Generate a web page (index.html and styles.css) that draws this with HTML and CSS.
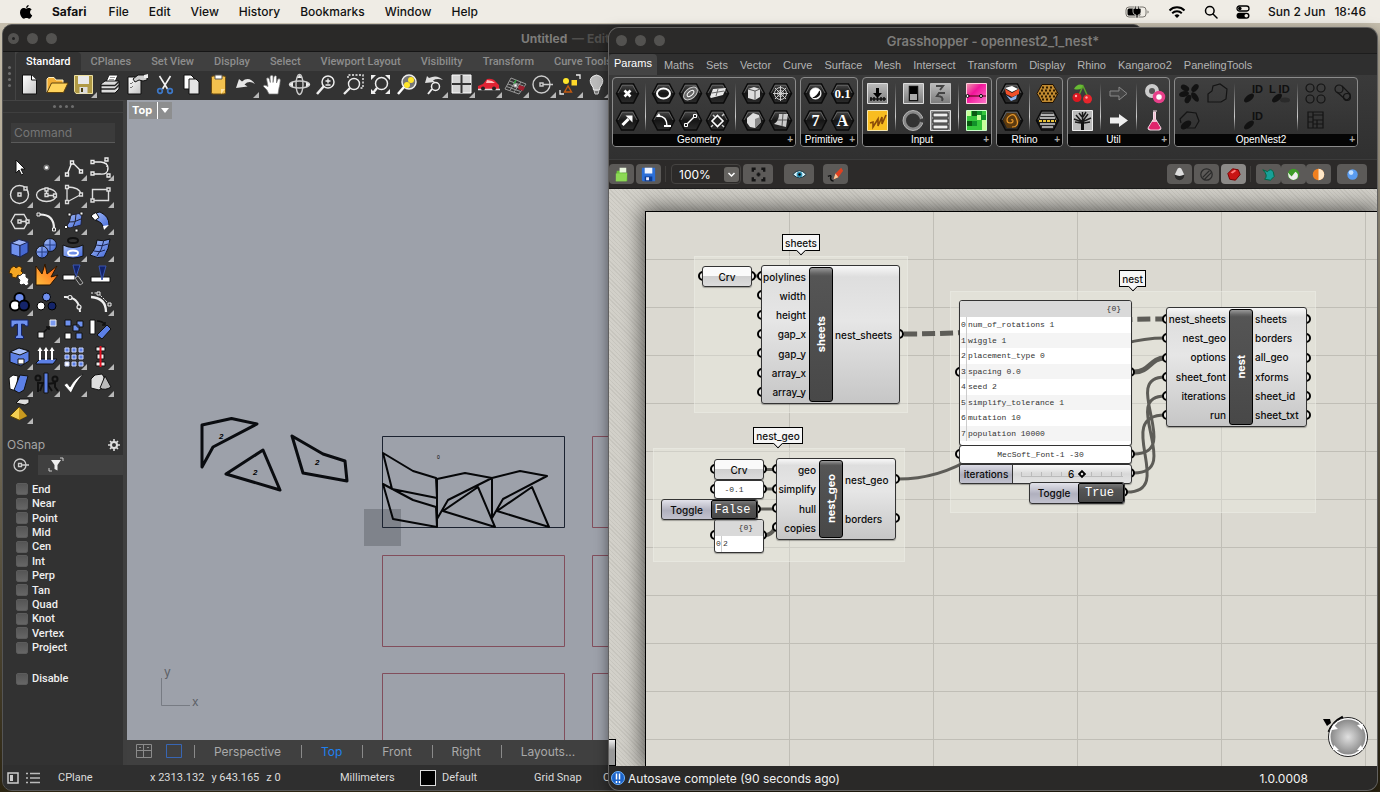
FILE: index.html
```html
<!DOCTYPE html>
<html lang="en">
<head>
<meta charset="utf-8">
<title>Grasshopper - opennest2_1_nest*</title>
<link rel="stylesheet" href="styles.css">
</head>
<body>
<svg class="defs" aria-hidden="true">
  <defs>
    <linearGradient id="gHex" x1="0" y1="0" x2="0" y2="1"><stop offset="0" stop-color="#4a4a4a"/><stop offset=".5" stop-color="#161616"/><stop offset="1" stop-color="#2c2c2c"/></linearGradient>
    <linearGradient id="gPaper" x1="0" y1="0" x2="1" y2="1"><stop offset="0" stop-color="#fff"/><stop offset="1" stop-color="#c4c4c4"/></linearGradient>
    <linearGradient id="gBlue" x1="0" y1="0" x2="1" y2="1"><stop offset="0" stop-color="#a9c0f8"/><stop offset="1" stop-color="#4066d8"/></linearGradient>
    <linearGradient id="gFire" x1="0" y1="1" x2="1" y2="0"><stop offset="0" stop-color="#ffc040"/><stop offset="1" stop-color="#ff5a10"/></linearGradient>
    <linearGradient id="gSteel" x1="0" y1="0" x2="0" y2="1"><stop offset="0" stop-color="#bbb"/><stop offset="1" stop-color="#7b7b7b"/></linearGradient>
    <linearGradient id="gPink" x1="0" y1="0" x2="1" y2="1"><stop offset="0" stop-color="#e9a"/><stop offset=".4" stop-color="#f2159a"/><stop offset="1" stop-color="#f7c"/></linearGradient>
    <radialGradient id="gDial"><stop offset="0" stop-color="#e0e0e0"/><stop offset="1" stop-color="#8a8a8a"/></radialGradient>
    <symbol id="hex" viewBox="0 0 27 27"><path d="M2.500 13.500 7.500 4h12l5 9.500-5 9.500h-12z" fill="url(#gHex)" stroke="#0a0a0a" stroke-width="1.500"/><path d="M4 13 8.300 5.200h10.400L23 13" fill="none" stroke="#777" stroke-width=".7"/></symbol>
  </defs>
</svg>

<header class="menubar">
  <svg class="apple" width="14" height="16" viewBox="0 0 14 16"><path d="M9.700 1c.1 1.500-1.200 2.900-2.600 2.900C7 2.500 8.200 1.200 9.700 1zM7.200 4.700c.7 0 1.500-.7 2.800-.7 1 0 2.100.6 2.700 1.500-2.400 1.400-2 4.800.5 5.700-.5 1.400-1.700 3.500-3.100 3.500-1 0-1.300-.6-2.600-.6s-1.700.6-2.600.6C3.300 14.700 1 11.400 1 8.500 1 5.700 2.800 4.100 4.500 4.100c1.200 0 2 .6 2.700.6z"/></svg>
  <nav class="menus">
    <button type="button" class="app">Safari</button><button type="button">File</button><button type="button">Edit</button><button type="button">View</button><button type="button">History</button><button type="button">Bookmarks</button><button type="button">Window</button><button type="button">Help</button>
  </nav>
  <div class="menu-extras">
    <svg width="25" height="14" viewBox="0 0 25 14"><rect x="1" y="2" width="20" height="10" rx="3" fill="none" stroke="#77746e"/><rect x="2.500" y="3.500" width="13" height="7" rx="1.500"/><path d="M22.500 5.500v3c1.500-.5 1.500-2.500 0-3z" fill="#77746e"/><path d="M8 3.500h1.500V1h1.500v2.500h2V1h1.500v2.500H16V7q0 2.500-3 3v3h-2v-3Q8 9.500 8 7z" stroke="#efece5" stroke-width=".7"/></svg>
    <svg width="18" height="14" viewBox="0 0 18 14" fill="none" stroke="#000" stroke-width="2"><path d="M1.500 5.500a10.500 10.500 0 0 1 15 0M4.200 8.300a6.800 6.800 0 0 1 9.600 0"/><path d="M6.500 10.500a3.600 3.600 0 0 1 5 0L9 13z" fill="#000" stroke="none"/></svg>
    <svg width="14" height="14" viewBox="0 0 14 14" fill="none" stroke="#000" stroke-width="1.500"><circle cx="5.800" cy="5.800" r="4.300"/><path d="m9 9 4 4" stroke-linecap="round"/></svg>
    <svg width="14" height="14" viewBox="0 0 14 14"><rect x="1" y="1" width="12" height="5" rx="2.500" fill="none" stroke="#000" stroke-width="1.300"/><circle cx="3.800" cy="3.500" r="1.800"/><rect x=".5" y="7.700" width="13" height="6" rx="3"/><circle cx="10.300" cy="10.700" r="1.800" fill="#efece5"/></svg>
    <time class="clock"><span>Sun 2 Jun</span><span>18:46</span></time>
  </div>
</header>

<main class="desktop">
<section class="window rhino" aria-label="Rhino">
  <div class="titlebar"><span class="lights"><i class="edited"></i><i></i><i></i></span><h1>Untitled <small>— Edited</small></h1></div>
  <div class="toolbars">
    <span class="handle"><i></i><i></i><i></i><i></i></span>
    <div class="bars">
      <nav class="rtabs"><button type="button" class="on">Standard</button><button type="button">CPlanes</button><button type="button">Set View</button><button type="button">Display</button><button type="button">Select</button><button type="button">Viewport Layout</button><button type="button">Visibility</button><button type="button">Transform</button><button type="button">Curve Tools</button></nav>
      <div class="tools">
        <button type="button" aria-label="New"><svg viewBox="0 0 27 27"><path d="M6.500 4h9l5 5v14h-14z" fill="url(#gPaper)" stroke="#111"/><path d="M15.500 4v5h5" fill="#fff" stroke="#111"/></svg></button>
        <button type="button" aria-label="Open"><svg viewBox="0 0 27 27"><path d="M4 21V8l1.500-1.500H11L13 9h7v3" fill="#f2ae35" stroke="#fff0c0"/><path d="M4 21.500 8.500 12H25l-4.500 9.500z" fill="#ffd35c" stroke="#60420c"/></svg></button>
        <button type="button" class="fly" aria-label="Save"><svg viewBox="0 0 27 27"><path d="M4.500 4.500h18v18H6l-1.500-2z" fill="#b09a45" stroke="#ecdfa0"/><path d="M8 5h11v8H8z" fill="#e8e8e8"/><path d="M9.500 16h8v6.500h-8z" fill="#ddd"/><path d="M11 17h2v4h-2z" fill="#4a4010"/></svg></button>
        <button type="button" aria-label="Print"><svg viewBox="0 0 27 27"><path d="M9 11 12 4h9l-3 7z" fill="#fff" stroke="#222"/><path d="M4 13l4-3h14v8l-4 4H4z" fill="#ddd" stroke="#111"/><path d="M4 14.500h14M4 18h14M18 14.500l4-4M18 18l4-4" stroke="#222" stroke-width="1.500"/><path d="M13 6.500h5M12 8.500h5" stroke="#999"/></svg></button>
        <button type="button" aria-label="Properties"><svg viewBox="0 0 27 27"><path d="M4 6h13v17H4z" fill="url(#gPaper)" stroke="#111"/><path d="M9 8l5-4h9v5l-4 1-4-1-4 2z" fill="#ccc" stroke="#111"/><path d="m20 4 4-1v4h-4z" fill="#eee"/><path d="m6 12 1 1 2-2M6 16l1 1 2-2" fill="none" stroke="#777"/></svg></button>
        <button type="button" aria-label="Cut"><svg viewBox="0 0 27 27" fill="none"><path d="m8.500 5 8 13M19.500 5l-8 13" stroke="#f2f2f2" stroke-width="1.600"/><circle cx="9" cy="20" r="2.300" stroke="#3d78c8" stroke-width="1.700"/><circle cx="19" cy="20" r="2.300" stroke="#3d78c8" stroke-width="1.700"/></svg></button>
        <button type="button" aria-label="Copy"><svg viewBox="0 0 27 27" stroke="#111"><path d="M6 4h7l3 3v11H6z" fill="#fff"/><path d="M11 8h7l3 3v12H11z" fill="#e4e4e4"/></svg></button>
        <button type="button" aria-label="Paste"><svg viewBox="0 0 27 27"><rect x="6.500" y="5" width="14" height="18" rx="1.500" fill="#f3c14e" stroke="#6a4a10"/><path d="M10 4h7v4h-7z" fill="#fff" stroke="#555"/><path d="M16 23v-5h4z" fill="#ffe3a0"/></svg></button>
        <button type="button" class="fly" aria-label="Undo"><svg viewBox="0 0 27 27"><path d="M4 17 7 8l3 2.500q7-6 13 2.500-6-4-10.500.5l3 2z" fill="#e6e6e6"/></svg></button>
        <button type="button" aria-label="Pan"><svg viewBox="0 0 27 27"><path d="M10 23Q8 18 4.500 15.500q0-2.500 4.500 0L7.500 7.500q2-2 3 1l.8 3-.3-6q2-2.500 3 0v6l1-6q2-1.500 2.500 0v6.500L19 8q2-1 2.300 1-.3 5-1.300 8l-1 6z" fill="#fff" stroke="#777" stroke-width=".7"/></svg></button>
        <button type="button" aria-label="Rotate view"><svg viewBox="0 0 27 27" fill="none" stroke="#ccc" stroke-width="1.400"><ellipse cx="13.500" cy="13.500" rx="10" ry="3.500"/><ellipse cx="13.500" cy="13.500" rx="3.500" ry="10"/><path d="m11 7 2.500-3L16 7zM20 11l4 2.500-4 2.500zM7 11l-4 2.500L7 16z" fill="#eee" stroke="none"/></svg></button>
        <button type="button" aria-label="Zoom"><svg viewBox="0 0 27 27" fill="none" stroke="#eee" stroke-width="1.500"><circle cx="15" cy="11" r="6"/><path d="m11 15-7 8" stroke-width="2.500"/><path d="M12.500 10h5M15 7.500v5M12.500 14h5" stroke-width="1.300"/></svg></button>
        <button type="button" aria-label="Zoom window"><svg viewBox="0 0 27 27" fill="none" stroke="#eee" stroke-width="1.400"><circle cx="14" cy="13" r="5.500"/><path d="m10 17-6 6" stroke-width="2.300"/><path d="M8 7V4h15v13h-3" stroke-dasharray="2 1.500"/></svg></button>
        <button type="button" aria-label="Zoom extents"><svg viewBox="0 0 27 27" fill="none" stroke="#eee" stroke-width="1.500"><circle cx="14.500" cy="12.500" r="6"/><path d="m10 17-4 5" stroke-width="2.300"/><path d="M4 9V4h5zM18 4h5v5zM23 18v5h-5zM4 18v5h5z" fill="#eee" stroke="none"/></svg></button>
        <button type="button" aria-label="Zoom selected"><svg viewBox="0 0 27 27"><circle cx="15" cy="11" r="7" fill="#777" stroke="#eee" stroke-width="1.500"/><circle cx="17" cy="9" r="3" fill="#ffe62a"/><circle cx="13" cy="14" r="3" fill="#ffe62a"/><path d="m10 16-6 7" stroke="#fff" stroke-width="2.500"/></svg></button>
        <button type="button" class="fly" aria-label="Undo view"><svg viewBox="0 0 27 27" fill="none"><path d="M4 12 6 5l2 2q8-4 14 2-6-2-10 .5l2 1.500z" fill="#ddd"/><circle cx="14.500" cy="15.500" r="4" stroke="#eee" stroke-width="1.500"/><path d="m11 18-4 5" stroke="#eee" stroke-width="2"/></svg></button>
        <button type="button" class="fly" aria-label="Four views"><svg viewBox="0 0 27 27"><path d="M4 4h19v18H4z" fill="#d4d4d4" stroke="#fff"/><path d="M13.500 4v18M4 13h19" stroke="#333" stroke-width="2"/></svg></button>
        <button type="button" class="fly" aria-label="Named view"><svg viewBox="0 0 27 27"><path d="M3 18v-3l5-2 4-5q6-1 9 3l3 3v4z" fill="#e02434"/><path d="m12 9 5 1 3 2h-9z" fill="#fbb"/><path d="M3 18.500h22" stroke="#ddd" stroke-width="1.500"/><circle cx="8" cy="17.500" r="2" fill="#222"/><circle cx="19" cy="17.500" r="2" fill="#222"/></svg></button>
        <button type="button" class="fly" aria-label="CPlane"><svg viewBox="0 0 27 27" fill="none" stroke="#999" stroke-width="1"><path d="M9 7 3 18l14 5 7-10zM7.500 10l14 5M6 13l14 5M4.500 15.500l14 5M14 9 8 19.500M19 11l-7 10"/><path d="m14 9-2 4" stroke="#30a040" stroke-width="1.500"/><path d="m17 14 6 2-2 4-5-2z" fill="#a02030" stroke="none"/><path d="M12 13h3v3h-3z" fill="#fff"/></svg></button>
        <button type="button" class="fly" aria-label="Object snap"><svg viewBox="0 0 27 27" fill="none" stroke="#ccc" stroke-width="1.400"><circle cx="12.500" cy="13.500" r="8.500"/><path d="M11 12h3v3h-3zM14 13.500h10"/></svg></button>
        <button type="button" class="fly" aria-label="Select"><svg viewBox="0 0 27 27"><circle cx="10" cy="10" r="3" fill="#ffe62a"/><path d="M15.500 9h5.500v5.500h-5.500z" fill="#ffd82a"/><path d="m12 15-3.500 6h7z" fill="none" stroke="#c35a10" stroke-width="1.400"/><path d="M20 4h4v4M4 19v4h4" fill="none" stroke="#eee" stroke-width="1.300"/></svg></button>
        <button type="button" class="fly" aria-label="Show"><svg viewBox="0 0 27 27"><path d="M10.500 19q0-3-2-5-3-5 1-8.500 4-3 8 0 4 3.500 1 8.500-2 2-2 5z" fill="#bbb" stroke="#eee"/><path d="M11 19.500h5l-1 3.500h-3z" fill="#777" stroke="#ccc"/></svg></button>
      </div>
    </div>
  </div>
  <div class="rbody">
    <aside class="side">
      <div class="grip"><i></i><i></i><i></i><i></i></div>
      <input class="command" type="text" placeholder="Command" aria-label="Command">
      <div class="palette">
        <button type="button" aria-label="Select"><svg viewBox="0 0 27 27"><path d="M10 6v13l3-3 2.500 5 2-1-2.500-5h4z" fill="#fff" stroke="#111"/></svg></button>
        <button type="button" class="fly" aria-label="Point"><svg viewBox="0 0 27 27"><circle cx="13.500" cy="13.500" r="2.300" fill="#fff" stroke="#777" stroke-width="1.500"/></svg></button>
        <button type="button" class="fly" aria-label="Polyline"><svg viewBox="0 0 27 27" fill="#333" stroke="#eee" stroke-width="1.400"><path d="m7 21 5-13 9 9" fill="none"/><path d="M5.500 19h3v3h-3zM10.500 7h3v3h-3zM19.500 16h3v3h-3z"/></svg></button>
        <button type="button" class="fly" aria-label="Curve"><svg viewBox="0 0 27 27" fill="#333" stroke="#eee" stroke-width="1.300"><path d="M6 8h8q7 1 7 6 0 7-8 6H6" fill="none"/><path d="M18 6l3 10" stroke-dasharray="1 2"/><path d="M4 6.500h3v3H4zM18 4h3v3h-3zM4 18h3v3H4zM20 20h3v3h-3z"/></svg></button>
        <button type="button" class="fly" aria-label="Circle"><svg viewBox="0 0 27 27" fill="#333" stroke="#ddd" stroke-width="1.400"><circle cx="13.500" cy="13.500" r="9"/><path d="M12 12h3v3h-3zM18 6h3v3h-3z"/></svg></button>
        <button type="button" class="fly" aria-label="Ellipse"><svg viewBox="0 0 27 27" fill="#333" stroke="#ddd" stroke-width="1.300"><ellipse cx="13.500" cy="14" rx="10" ry="6.500"/><path d="M13.500 8v6.500H23"/><path d="M12 7h3v3h-3zM12 12.500h3v3h-3zM20.500 13h3v3h-3z"/></svg></button>
        <button type="button" class="fly" aria-label="Arc"><svg viewBox="0 0 27 27" fill="#333" stroke="#ddd" stroke-width="1.300"><path d="M7 6q13 0 14 7.500L7 21z"/><path d="M5.500 4.500h3v3h-3zM5.500 19.500h3v3h-3zM19.500 12h3v3h-3z"/></svg></button>
        <button type="button" class="fly" aria-label="Rectangle"><svg viewBox="0 0 27 27" fill="#333" stroke="#ddd" stroke-width="1.400"><path d="M5.500 8.500h16v11h-16z"/><path d="M4 18h3v3H4zM20 7h3v3h-3z"/></svg></button>
        <button type="button" class="fly" aria-label="Polygon"><svg viewBox="0 0 27 27" fill="#333" stroke="#ddd" stroke-width="1.400"><path d="m5 13.500 4-7h9l4 7-4 7H9z"/><path d="M12 12h3v3h-3zM15 13.500h5M20 12h3v3h-3z"/></svg></button>
        <button type="button" class="fly" aria-label="Fillet"><svg viewBox="0 0 27 27" fill="#333" stroke="#eee"><path d="M7 6.500q14 0 14 14" fill="none" stroke-width="2.200"/><path d="M4 5h3v3H4zM19.500 20h3v3h-3z"/></svg></button>
        <button type="button" class="fly" aria-label="Surface from points"><svg viewBox="0 0 27 27"><path d="m11 7 11-2-1 12-11 3-4-1q4-4 5-12z" fill="url(#gBlue)" stroke="#223"/><path d="M8 14q6 1 13-3M16 6q0 8-3 13" stroke="#223" fill="none"/><path d="M8 5h3v3H8zM20 4h3v3h-3zM4.500 17.500h3v3h-3zM15 21h3v3h-3z" fill="#fff" stroke="#222"/></svg></button>
        <button type="button" class="fly" aria-label="Sweep"><svg viewBox="0 0 27 27"><path d="M4 8q4-4 9-4 9 4 9 13l-5 5Q16 13 7 12z" fill="url(#gBlue)" stroke="#111"/><path d="M4 8q3-3 5-3.500l3 5-4 3z" fill="#fff" stroke="#111"/><path d="M16 18l6-1-5 5z" fill="#fff"/></svg></button>
        <button type="button" class="fly" aria-label="Box"><svg viewBox="0 0 27 27" stroke="#1b2450"><path d="m5 8 8-3.500 9 2.500v10L14 22l-9-3z" fill="#9db4f6"/><path d="m5 8 9 2.500V22l-9-3z" fill="#6f90ee"/><path d="m14 10.500 8-3.500v10.500L14 22z" fill="#4669d2"/></svg></button>
        <button type="button" class="fly" aria-label="Spheres"><svg viewBox="0 0 27 27" fill="url(#gBlue)" stroke="#111"><circle cx="17" cy="10" r="6.500"/><circle cx="9" cy="17" r="6"/><path d="M10.500 10h13M17 3.500v13M3 17h12M9 11v12" fill="none" stroke="#223a80"/></svg></button>
        <button type="button" class="fly" aria-label="Extrude surface"><svg viewBox="0 0 27 27"><ellipse cx="13" cy="5.500" rx="5" ry="2.500" fill="none" stroke="#111" stroke-width="2"/><path d="M3 10q10 5 20 0v11q-10 4-20 0z" fill="url(#gBlue)" stroke="#111"/><ellipse cx="13" cy="18" rx="5" ry="2.500" fill="none" stroke="#fff" stroke-width="2"/></svg></button>
        <button type="button" class="fly" aria-label="Mesh plane"><svg viewBox="0 0 27 27"><path d="M10 5q6 2 13-1-1 10-6 18-6 2-14-2 6-6 7-15z" fill="url(#gBlue)" stroke="#111"/><path d="M9 10q6 2 12-1M7 16q6 2 11-1M17 5q-2 10-7 16" fill="none" stroke="#1b2450"/></svg></button>
        <button type="button" class="fly" aria-label="Boolean union"><svg viewBox="0 0 27 27"><path d="m5 6 3-2 2 2 3-2 3 2-1 3 2 2-2 3-3-1-2 3-4-1 0-3-3-1 1-3z" fill="#f5a623" stroke="#4a2a00"/><path d="m12 14 3-1 2-2 3 1 0 3 3 2-1 3 1 2-3 2-2-2-3 1-2-2 1-3-2-2z" fill="#fff" stroke="#333"/></svg></button>
        <button type="button" aria-label="Explode"><svg viewBox="0 0 27 27"><path d="m3 4 6 8 3-10 2 10L24 4l-6 11 7-2-8 10H3z" fill="url(#gFire)" stroke="#2a1500"/></svg></button>
        <button type="button" aria-label="Trim"><svg viewBox="0 0 27 27"><path d="M13 3h7l-4 12z" fill="#12236b" stroke="#3a55b0"/><path d="M3 13h12v5H3z" fill="#fff" stroke="#111"/><path d="m15 16 3-2 5 7-3 2z" fill="none" stroke="#aaa"/></svg></button>
        <button type="button" aria-label="Split"><svg viewBox="0 0 27 27"><path d="M4 15h19v5H4z" fill="#fff" stroke="#111"/><path d="M12 4h7l-4 14z" fill="#12236b" stroke="#3a55b0"/></svg></button>
        <button type="button" class="fly" aria-label="Group"><svg viewBox="0 0 27 27" stroke="#000" stroke-width="2"><circle cx="13.500" cy="9" r="5" fill="#6f8ff0"/><circle cx="9" cy="16.500" r="5" fill="#fff"/><circle cx="18" cy="16.500" r="5" fill="#14246a"/></svg></button>
        <button type="button" aria-label="Ungroup"><svg viewBox="0 0 27 27" stroke="#000"><circle cx="13.500" cy="8" r="4" fill="#6f8ff0"/><circle cx="8" cy="17" r="4" fill="#fff"/><circle cx="19" cy="17" r="4" fill="#14246a"/></svg></button>
        <button type="button" aria-label="Edit points"><svg viewBox="0 0 27 27" fill="#333" stroke="#eee" stroke-width="2"><path d="M4 8q15-1 16 15" fill="none"/><g stroke-width="1.200"><circle cx="10" cy="8.500" r="2"/><circle cx="19" cy="18" r="2"/></g></svg></button>
        <button type="button" class="fly" aria-label="Control points"><svg viewBox="0 0 27 27" fill="#333" stroke="#eee"><path d="M4 8q15 1 15 15" fill="none" stroke-width="2.300"/><path d="M4 4h7l11 11" stroke-dasharray="2 1.500" fill="none"/><path d="M10 3h3v3h-3zM21 14h3v3h-3z"/></svg></button>
        <button type="button" aria-label="Text"><svg viewBox="0 0 27 27"><path d="M5 4h17v6h-2.500q0-2-4-2v11q0 1 2 1v2.500h-8V20q2 0 2-1V8q-4 0-4 3H5z" fill="#6f92f0" stroke="#14246a"/></svg></button>
        <button type="button" class="fly" aria-label="Move"><svg viewBox="0 0 27 27"><path d="M5 16h6v6H5z" fill="#eee" stroke="#111"/><path d="M17 4h6v6h-6z" fill="#7b9af0" stroke="#eee"/><path d="m11 16 5-5m-3 0h3v3" stroke="#111" stroke-width="1.500" fill="none"/></svg></button>
        <button type="button" aria-label="Copy"><svg viewBox="0 0 27 27" fill="#6f92f0" stroke="#111"><path d="M5 4h6v6H5z"/><path d="M17 5h6v6h-6zM13 9h6v6h-6zM16 17h6v6h-6z"/><path d="M5 17h6v6H5z" fill="#fff"/></svg></button>
        <button type="button" aria-label="Rotate"><svg viewBox="0 0 27 27"><path d="M3 4h5v14H3z" fill="#fff" stroke="#111"/><path d="m10 19 10-10 4 4-9 10z" fill="#5c80e6" stroke="#111"/><path d="M10 5q6 0 8 4m-3 0h3V6" fill="none" stroke="#111" stroke-width="1.500"/></svg></button>
        <button type="button" class="fly" aria-label="Cage edit"><svg viewBox="0 0 27 27" stroke="#111"><path d="m4 9 9-4 10 3v10l-8 5-11-4z" fill="#5c80e6"/><path d="m4 9 10 3 9-4-10-3z" fill="#a9c0f8"/><path d="M12 16h6v5h-6z" fill="#fff"/></svg></button>
        <button type="button" class="fly" aria-label="Extrude"><svg viewBox="0 0 27 27"><path d="m3 20 4-4h17l-4 5H3z" fill="#5c80e6" stroke="#111"/><path d="M7 17V6M13 17V6M19 17V6" stroke="#fff" stroke-width="2"/><path d="m4.500 8 2.500-4 2.500 4zM10.500 8 13 4l2.500 4zM16.500 8 19 4l2.500 4z" fill="#fff"/></svg></button>
        <button type="button" class="fly" aria-label="Array"><svg viewBox="0 0 27 27" fill="#5c80e6" stroke="#c8d4ff"><path d="M5 5h4v4H5zM12 5h4v4h-4zM19 5h4v4h-4zM5 12h4v4H5zM12 12h4v4h-4zM19 12h4v4h-4zM12 19h4v4h-4zM19 19h4v4h-4z"/><path d="M5 19h4v4H5z" fill="#fff"/></svg></button>
        <button type="button" class="fly" aria-label="Align"><svg viewBox="0 0 27 27"><path d="M9 4h9v4H9zM10 11h7v5h-7zM9 19h9v4H9z" fill="#eee" stroke="#111"/><path d="M13.500 3v21" stroke="#e01020" stroke-width="2"/></svg></button>
        <button type="button" class="fly" aria-label="Offset"><svg viewBox="0 0 27 27" stroke="#111"><path d="m3 8 4-3 5 1-2 15-6-2z" fill="#fff"/><path d="m14 5 8 1-4 14-5 3-5-3z" fill="#5c80e6"/></svg></button>
        <button type="button" class="fly" aria-label="Symmetry"><svg viewBox="0 0 27 27" fill="none" stroke="#111" stroke-width="2"><circle cx="5" cy="8" r="2.500"/><circle cx="22" cy="9" r="2.500"/><path d="M4 13h8M5 13v9M14 14l8-1v4l3 4M10 13 7 21M15 15l4 6"/><path d="M11 3h4v20h-4z" fill="#5c80e6" stroke-width="1"/></svg></button>
        <button type="button" class="fly" aria-label="Check"><svg viewBox="0 0 27 27"><path d="m4 15 3-2 3 4q5-9 13-13-8 9-12 19z" fill="#fff" stroke="#111" stroke-width=".6"/></svg></button>
        <button type="button" class="fly" aria-label="Solids"><svg viewBox="0 0 27 27" stroke="#111"><path d="m4 9 4-4 7-1 2 3v10l-5 3-8-2z" fill="#ddd"/><path d="m18 6-5 12q5 3 11-1z" fill="#bbb"/></svg></button>
        <button type="button" class="fly" aria-label="Layers"><svg viewBox="0 0 27 27"><path d="m10 6 4-4h9v4l-4 2z" fill="#ddd" stroke="#111"/><path d="m4 19 9-9 8 9-8 4z" fill="#f3cf52" stroke="#5a4200"/><path d="m13 10 8 9-8 4z" fill="#c99a20"/></svg></button>
      </div>
      <div class="osnap-head"><h2>OSnap</h2><svg width="12" height="12" viewBox="0 0 12 12" fill="none" stroke="#ddd"><circle cx="6" cy="6" r="3" stroke-width="2"/><path d="M6 0v3M6 9v3M0 6h3M9 6h3M2 2l2 2M8 8l2 2M10 2 8 4M4 8l-2 2" stroke-width="1.600"/></svg></div>
      <div class="osnap-tabs">
        <button type="button" class="on" aria-label="Snaps"><svg width="18" height="14" viewBox="0 0 18 14" fill="none" stroke="#ccc" stroke-width="1.300"><circle cx="8" cy="7" r="6"/><path d="M6.500 5.500h3v3h-3zM9.500 7H17"/></svg></button>
        <button type="button" aria-label="Filter"><svg width="16" height="16" viewBox="0 0 16 16"><path d="M3 3h10L9.500 8v5.500L6.500 12V8z" fill="#eee"/><path d="M12 1h3v3M1 11v3h3" fill="none" stroke="#ccc"/></svg></button>
      </div>
      <div class="osnap-list">
        <label><input type="checkbox">End</label><label><input type="checkbox">Near</label><label><input type="checkbox">Point</label><label><input type="checkbox">Mid</label><label><input type="checkbox">Cen</label><label><input type="checkbox">Int</label><label><input type="checkbox">Perp</label><label><input type="checkbox">Tan</label><label><input type="checkbox">Quad</label><label><input type="checkbox">Knot</label><label><input type="checkbox">Vertex</label><label><input type="checkbox">Project</label>
      </div>
      <div class="osnap-off"><label><input type="checkbox">Disable</label></div>
    </aside>
    <div class="views">
      <div class="viewport">
        <svg class="model" width="620" height="640" viewBox="127 100 620 640">
          <path d="M364 509h37v37h-37z" fill="#7f838b"/>
          <g fill="none" stroke="#824e5c"><path d="M382.500 555.500h182v91h-182zM382.500 740v-66.500h182V740M640 436.500h-47.500v91H640M640 555.500h-47.500v91H640M592.500 740v-66.500H640"/></g>
          <path d="M382.500 436.500h182v91h-182z" fill="none" stroke="#1b2230"/>
          <g fill="none" stroke="#0a0c10" stroke-width="3" stroke-linejoin="round"><path d="m202 425 29.500-6.500L257 424l-44 23-11 20zM263 450l17 40-54-16zM292 436l31 18 22 7 2 20-44-8z"/></g>
          <g fill="none" stroke="#050608" stroke-width="2" stroke-linejoin="round"><path d="m383 453 30 18 23 7 1 20-45-9zM383 484l30 16 23 7 1 20-44-8zM437 479l28-6 27 5-44 22-11 19zM478 487l17 40-52-16zM492 478l28-7 27 5-44 23-11 19zM532 487l17 40-52-16z"/><path d="M437 479v48"/></g>
          <g class="part-ids"><text x="219" y="439">2</text><text x="253" y="475">2</text><text x="315" y="465">2</text></g>
          <text class="sheet-id" x="437" y="459">0</text>
          <path d="M161.500 678v27.500H190" fill="none" stroke="#777b83"/>
          <g class="axis"><text x="164" y="676">y</text><text x="192" y="706">x</text></g>
        </svg>
        <div class="view-title"><span>Top</span><button type="button" aria-label="Viewport menu"><svg width="8" height="5" viewBox="0 0 8 5"><path d="M0 0h8L4 5z" fill="#fff"/></svg></button></div>
      </div>
      <nav class="view-tabs">
        <button type="button" class="layout" aria-label="Four viewports"><svg width="16" height="14" viewBox="0 0 16 14" fill="none" stroke="#8b8b8b"><path d="M.5.5h15v13H.5zM7.500 0v14M0 6.500h16M3 3.500h2M11 3.500h2"/></svg></button>
        <button type="button" class="layout" aria-label="Single viewport"><svg width="16" height="14" viewBox="0 0 16 14" fill="none" stroke="#3866b4"><path d="M.5.500h15v13H.5z"/></svg></button>
        <button type="button" class="view">Perspective</button><button type="button" class="view on">Top</button><button type="button" class="view">Front</button><button type="button" class="view">Right</button><button type="button" class="view">Layouts...</button>
      </nav>
    </div>
  </div>
  <footer class="rstatus">
    <span class="panels"><svg width="12" height="12" viewBox="0 0 12 12"><path d="M1 1h10v10H1z" fill="none" stroke="#ccc" stroke-width="1.500"/><path d="M3 3h3v6H3z" fill="#ccc"/></svg><svg width="14" height="12" viewBox="0 0 14 12" stroke="#bbb" stroke-width="1.400"><path d="M0 1.500h2M4 1.500h10M0 6h2M4 6h10M0 10.500h2M4 10.500h10"/></svg></span>
    <span class="cplane">CPlane</span>
    <span class="coords"><span>x 2313.132</span><span>y 643.165</span><span>z 0</span></span>
    <span class="units">Millimeters</span>
    <span class="layer"><i></i>Default</span>
    <span class="snap">Grid Snap</span>
    <span>Ortho</span>
  </footer>
</section>

<section class="window gh" aria-label="Grasshopper">
  <div class="titlebar"><span class="lights"><i></i><i></i><i></i></span><h1>Grasshopper - opennest2_1_nest*</h1></div>
  <nav class="gtabs"><button type="button" class="on">Params</button><button type="button">Maths</button><button type="button">Sets</button><button type="button">Vector</button><button type="button">Curve</button><button type="button">Surface</button><button type="button">Mesh</button><button type="button">Intersect</button><button type="button">Transform</button><button type="button">Display</button><button type="button">Rhino</button><button type="button">Kangaroo2</button><button type="button">PanelingTools</button></nav>
  <div class="ribbon">
    <section class="group">
      <div class="icons">
        <div class="c1">
          <svg viewBox="0 0 27 27"><use href="#hex"/><path d="m10.500 10.500 6 6m0-6-6 6" stroke="#fff" stroke-width="2.600"/></svg>
          <svg viewBox="0 0 27 27"><use href="#hex"/><path d="m8.500 18 6-6" stroke="#fff" stroke-width="3"/><path d="M11.500 8.500h7v7z" fill="#fff"/></svg>
        </div>
        <div class="c3">
          <svg viewBox="0 0 27 27"><use href="#hex"/><ellipse cx="13.500" cy="13.500" rx="6.500" ry="5" fill="none" stroke="#fff" stroke-width="2"/></svg>
          <svg viewBox="0 0 27 27"><use href="#hex"/><g fill="none" stroke="#ccc"><ellipse cx="13.500" cy="13.500" rx="8" ry="5" transform="rotate(-40 13.500 13.500)" fill="#666"/><ellipse cx="13.500" cy="13.500" rx="4" ry="2" transform="rotate(-40 13.500 13.500)" stroke="#fff"/></g></svg>
          <svg viewBox="0 0 27 27"><use href="#hex"/><path d="m9 9 13-1-3 7-12 3-1-1z" fill="#e8e8e8"/><path d="m8 13 12-2m-6-2-2 7" fill="none" stroke="#666"/></svg>
          <svg viewBox="0 0 27 27"><use href="#hex"/><path d="M8 9q9 0 9 10" fill="none" stroke="#fff" stroke-width="1.500"/><path d="m6 10 3-4 2 4zM14 18h7v2h-7z" fill="#fff"/></svg>
          <svg viewBox="0 0 27 27"><use href="#hex"/><path d="m9 18 9-9" stroke="#fff" stroke-width="1.500"/><path d="M7.500 16.500h3v3h-3zM16.500 7.500h3v3h-3z" fill="#222" stroke="#fff"/></svg>
          <svg viewBox="0 0 27 27"><use href="#hex"/><path d="M13.500 8.500 19 14l-5.500 5.500L8 14z" fill="#222" stroke="#fff" stroke-width="1.600"/><path d="m9 8 2 2M18 18l2 2M18 9l2-2M7 20l2-2" stroke="#ccc" stroke-width="1.500"/></svg>
        </div>
        <div class="c2">
          <svg viewBox="0 0 27 27"><use href="#hex"/><path d="m8 9 6-2 6 2v8l-5 3-7-2z" fill="#ddd"/><path d="m8 9 7 2 5-2m-5 2v9" fill="none" stroke="#555"/></svg>
          <svg viewBox="0 0 27 27"><use href="#hex"/><g fill="none" stroke="#ccc"><circle cx="13.500" cy="13.500" r="3"/><circle cx="13.500" cy="13.500" r="6"/><path d="M13.500 6v15M6 13.500h15M8 8l11 11M19 8 8 19"/></g></svg>
          <svg viewBox="0 0 27 27"><use href="#hex"/><path d="m7 11 6-5 6 2 2 7-6 6-5-1-3-4z" fill="#ddd"/><path d="m15 12 5-2 1 5-6 6z" fill="#888"/></svg>
          <svg viewBox="0 0 27 27"><use href="#hex"/><path d="M12 7h9l-2 13-12-3q5-3 5-10z" fill="#ccc"/><path d="M10 13h10M16 7l-1 12" stroke="#555"/></svg>
        </div>
      </div>
      <h3>Geometry</h3>
    </section>
    <section class="group">
      <div class="icons"><div class="c2">
        <svg viewBox="0 0 27 27"><use href="#hex"/><circle cx="13.500" cy="13.500" r="5.500" fill="#fff"/><path d="M10 17.500q5-1 7.500-7.500 2 4-1 6.500-3 2.500-6.500 1z" fill="#111"/><circle cx="13.500" cy="13.500" r="5.500" fill="none" stroke="#fff"/></svg>
        <svg viewBox="0 0 27 27"><use href="#hex"/><text class="glyph sm" x="13.500" y="18">0.1</text></svg>
        <svg viewBox="0 0 27 27"><use href="#hex"/><text class="glyph" x="13.500" y="19">7</text></svg>
        <svg viewBox="0 0 27 27"><use href="#hex"/><text class="glyph" x="13.500" y="19">A</text></svg>
      </div></div>
      <h3>Primitive</h3>
    </section>
    <section class="group">
      <div class="icons">
        <div class="c1">
          <svg viewBox="0 0 27 27"><path d="M3.500 3.500h20v20h-20z" fill="url(#gSteel)" stroke="#ddd"/><path d="M6 19h16M7 17v4M10 17v4M13.500 17v4M17 17v4M20 17v4" stroke="#111" stroke-width="1.500"/><path d="M12 8h3v5h3l-4.500 5L9 13h3z"/></svg>
          <svg viewBox="0 0 27 27"><path d="M3.500 3.500h20v20h-20z" fill="#f9bd20" stroke="#f5e6b0"/><path d="m6 16 3-1v5l5-8v7l4-9v7l4-9" fill="none" stroke="#8a4a08" stroke-width="1.600"/></svg>
        </div>
        <div class="c2">
          <svg viewBox="0 0 27 27"><path d="M3.500 3.500h20v20h-20z" fill="url(#gSteel)" stroke="#ddd"/><path d="M9.500 6.500h8v14h-8z" fill="#ddd" stroke="#111" stroke-width="1.500"/><path d="M10 14h7v6h-7z" fill="#aaa"/><path d="M10 7h7v7h-7z"/></svg>
          <svg viewBox="0 0 27 27"><path d="M3.500 3.500h20v20h-20z" fill="url(#gSteel)" stroke="#bbb"/><path d="M9 6h7l-3 4M18 13h-6l-2 3q7 0 5 5" fill="none" stroke="#444" stroke-width="2"/></svg>
          <svg viewBox="0 0 27 27"><circle cx="13" cy="13.500" r="8.500" fill="#333" stroke="#888" stroke-width="3"/><circle cx="13" cy="13.500" r="10" fill="none" stroke="#ccc" stroke-width=".8"/><path d="m17 13.500 8-3v6z" fill="#3a3a3a"/></svg>
          <svg viewBox="0 0 27 27"><path d="M3.500 3.500h20v20h-20z" fill="#888" stroke="#ddd"/><path d="M6 6h15v4H6zM6 12h15v4H6zM6 18h15v4H6z" fill="#eee" stroke="#222"/></svg>
        </div>
        <div class="c1">
          <svg viewBox="0 0 27 27"><path d="M3.500 3.500h20v20h-20z" fill="url(#gPink)" stroke="#fcd"/><path d="M3 16h20" stroke="#400"/><circle cx="4.500" cy="16" r="1.500" fill="#fff" stroke="#000"/><circle cx="18" cy="16" r="1.500" fill="#fff" stroke="#000"/></svg>
          <svg viewBox="0 0 27 27"><path d="M3.500 3.500h20v20h-20z" fill="#35c63c" stroke="#cfc"/><path d="M4 4h4v5H4zM14 8h4v5h-4zM19 13h4v10h-4z" fill="#c8ff9a"/><path d="M9 4h5v5H9zM4 14h5v5H4z" fill="#0b5a12"/><path d="M14 4h5v4h-5zM9 14h5v5H9zM18 8h5v5h-5z" fill="#12902a"/></svg>
        </div>
      </div>
      <h3>Input</h3>
    </section>
    <section class="group">
      <div class="icons">
        <div class="c1">
          <svg viewBox="0 0 27 27"><use href="#hex"/><path d="m7 8 7-2 6 3-6 3z" fill="#fff"/><path d="m7 9 7 4 7-4v5l-7 3-6-3z" fill="#f0502a"/><path d="m8 15 5 3 6-3-1 4-5 2z" fill="#8fb4ee"/></svg>
          <svg viewBox="0 0 27 27"><use href="#hex"/><path d="M5 13.500 9 6h9l4 7.500L18 21H9z" fill="#5b3a10"/><path d="M13 13q2-1 2 1t-3 2-3-3 4-5 6 5-5 7" fill="none" stroke="#e8982a" stroke-width="1.200"/></svg>
        </div>
        <div class="c1">
          <svg viewBox="0 0 27 27"><path d="m3 13.500 5-9h11l5 9-5 9H8z" fill="#c08a30" stroke="#201000"/><path d="M8 7.500h12M7 10.500h14M5 13.500h18M7 16.500h14M8 19.500h12" stroke="#2c1a00" stroke-width="1.800" stroke-dasharray="2 2"/></svg>
          <svg viewBox="0 0 27 27"><use href="#hex"/><path d="M7 8h13M6 11h15" stroke="#ddd" stroke-width="1.500"/><path d="M5 14h17" stroke="#e8c23a" stroke-width="2" stroke-dasharray="3 1"/><path d="M6 17h15M8 20h11" stroke="#ccc" stroke-width="1.500"/></svg>
        </div>
      </div>
      <h3>Rhino</h3>
    </section>
    <section class="group">
      <div class="icons">
        <div class="c1">
          <svg viewBox="0 0 27 27"><path d="M9 17 14 6l5 11" fill="none" stroke="#5aa02a" stroke-width="1.500"/><path d="M5 9q3-6 9-4-1 6-9 4z" fill="#67bb33"/><circle cx="8" cy="17.500" r="4.500" fill="#dc1820"/><circle cx="18.500" cy="19" r="4.500" fill="#e8252c"/><circle cx="7" cy="16" r="1.200" fill="#faa"/><circle cx="17.500" cy="17.500" r="1.200" fill="#faa"/></svg>
          <svg viewBox="0 0 27 27"><path d="M3.500 3.500h20v20h-20z" fill="#bbb" stroke="#eee"/><path d="M13.500 23v-9" stroke="#111" stroke-width="3"/><path d="m7 8 6 7 6-8M5 12l8 3 9-4M13.500 14V5M10 6l3 4M17 5l-3 5M6 15l6 1M21 15l-6 1" fill="none" stroke="#1a1a1a" stroke-width="1.500"/></svg>
        </div>
        <div class="c1">
          <svg viewBox="0 0 27 27"><path d="M5 11h9V7l8 6.500-8 6.500v-4H5z" fill="#454545" stroke="#888"/></svg>
          <svg viewBox="0 0 27 27"><path d="M5 10.500h9V7l9 6.500-9 6.500v-3.500H5z" fill="#eee"/></svg>
        </div>
        <div class="c1">
          <svg viewBox="0 0 27 27"><circle cx="11" cy="11" r="5" fill="#555" stroke="#ccc" stroke-width="4"/><circle cx="18" cy="17" r="4.500" fill="#fff" stroke="#e8408a" stroke-width="3.500"/></svg>
          <svg viewBox="0 0 27 27"><path d="M12 4h4M12.500 5v7L7 21q0 2 2 2h9q2 0 2-2l-5.500-9V5z" fill="#f6bcd2" stroke="#f6dce6"/><path d="m11 15-3.500 6 2 1.500h8l2-1.500-3.500-6z" fill="#e0246c"/></svg>
        </div>
      </div>
      <h3>Util</h3>
    </section>
    <section class="group">
      <div class="icons">
        <div class="c2">
          <svg viewBox="0 0 27 27"><g fill="#121212"><ellipse cx="9" cy="8" rx="4.500" ry="2.800" transform="rotate(30 9 8)"/><ellipse cx="19" cy="8" rx="4.500" ry="2.800" transform="rotate(-50 19 8)"/><ellipse cx="8" cy="14" rx="5" ry="2.800" transform="rotate(-15 8 14)"/><ellipse cx="12" cy="19" rx="4.500" ry="2.800" transform="rotate(-60 12 19)"/><ellipse cx="19" cy="17" rx="5.500" ry="2.800" transform="rotate(55 19 17)"/></g></svg>
          <svg viewBox="0 0 27 27"><path d="m5 22 0-8 4-3 1-5 7-2 7 5-1 10-5 3z" fill="none" stroke="#141414" stroke-width="1.200"/></svg>
          <svg viewBox="0 0 27 27"><path d="M5 16 4 12l7-7 9 1 3 8-4 7h-8" fill="none" stroke="#141414" stroke-width="1.200"/><ellipse cx="10" cy="18" rx="6" ry="3.500" transform="rotate(-35 10 18)" fill="#121212"/></svg>
        </div>
        <div class="c2">
          <svg viewBox="0 0 27 27"><ellipse cx="10" cy="18" rx="6" ry="3" transform="rotate(-40 10 18)" fill="#121212"/><text class="idtext" x="13" y="13">ID</text></svg>
          <svg viewBox="0 0 27 27"><ellipse cx="11" cy="18" rx="6" ry="3" transform="rotate(-40 11 18)" fill="#121212"/><ellipse cx="19" cy="20" rx="5" ry="2.500" fill="#2a2a2a"/><text class="idtext" x="3" y="13">L ID</text></svg>
          <svg viewBox="0 0 27 27"><ellipse cx="10" cy="18" rx="6" ry="3" transform="rotate(-40 10 18)" fill="#121212"/><text class="idtext" x="13" y="13">ID</text></svg>
        </div>
        <div class="c2">
          <svg viewBox="0 0 27 27"><g fill="none" stroke="#141414" stroke-width="1.200"><circle cx="8" cy="8" r="4"/><circle cx="19" cy="8" r="4"/><circle cx="8" cy="19" r="4"/><circle cx="19" cy="19" r="4"/></g></svg>
          <svg viewBox="0 0 27 27"><g fill="none" stroke="#141414" stroke-width="1.200"><circle cx="10" cy="9" r="4"/><path d="m13 6 8 8q1 5-4 6l-9-8"/><circle cx="18" cy="17" r="3.500"/></g></svg>
          <svg viewBox="0 0 27 27"><path d="M6 5h15v16H6zM11 5v16M6 10h5M6 15h5M11 8h10M11 13h10M15 13v8M11 17h10" fill="none" stroke="#141414" stroke-width="1.200"/></svg>
        </div>
      </div>
      <h3>OpenNest2</h3>
    </section>
  </div>
  <div class="gtools">
    <button type="button" aria-label="Open"><svg viewBox="0 0 20 20"><path d="M5 6h5l1 2h5v9H4z" fill="#6cc43c"/><path d="M8 3h7v5H8z" fill="#e8f6dc"/><path d="M4 9h12l-1 8H4z" fill="#8cd854"/></svg></button>
    <button type="button" aria-label="Save"><svg viewBox="0 0 20 20"><path d="M3 3h14v14H4l-1-1z" fill="#2c6fd8"/><path d="M6 3h8v6H6z" fill="#eef4ff"/><path d="M6 12h8v5H6z" fill="#0f3c90"/><path d="M7.500 13h3v3h-3z" fill="#eef"/></svg></button>
    <span class="sep"></span>
    <label class="zoom"><select aria-label="Zoom"><option>100%</option></select><svg width="15" height="15" viewBox="0 0 15 15"><rect width="15" height="15" rx="3" fill="#656360"/><path d="m4.500 6 3 3 3-3" fill="none" stroke="#fff" stroke-width="1.500"/></svg></label>
    <button type="button" class="wide" aria-label="Zoom extents"><svg viewBox="0 0 20 20" fill="none" stroke="#151515" stroke-width="2.500"><path d="M4 7V4h3M13 4h3v3M16 13v3h-3M7 16H4v-3"/><path d="M8 10h4M10 8v4" stroke-width="2"/></svg></button>
    <button type="button" class="wide eye" aria-label="Preview"><svg viewBox="0 0 20 20"><path d="M3 10q7-8 14 0-7 7-14 0z" fill="#d8f2fa" stroke="#12303c"/><circle cx="10" cy="10" r="3" fill="#2a8fb4"/><circle cx="10" cy="10" r="1.300"/></svg></button>
    <button type="button" class="pen" aria-label="Sketch"><svg viewBox="0 0 20 20"><path d="M2 12q4-2 3 1t3 4" fill="none" stroke="#111" stroke-width="1.500"/><path d="m8 15 2-6 6-6 2 3-5 7z" fill="#e04020"/><path d="m8 15 2-6 3 4z" fill="#f8c89a"/></svg></button>
    <span class="spring"></span>
    <button type="button" aria-label="No preview"><svg viewBox="0 0 20 20"><circle cx="10" cy="11" r="5" fill="#2a2a2a"/><path d="M5 10q5 3 10 0l-3-6q-2-2-4 0z" fill="#ddd"/></svg></button>
    <button type="button" aria-label="Wireframe preview"><svg viewBox="0 0 20 20" fill="none" stroke="#2a2a2a" stroke-width="1.300"><circle cx="10" cy="10" r="6"/><path d="m6 13 7-7M8 15l7-7"/></svg></button>
    <button type="button" class="lit" aria-label="Shaded preview"><svg viewBox="0 0 20 20"><path d="m4 9 5-5 6 1 2 5-5 6-6-1z" fill="#c81414" stroke="#700" stroke-linejoin="round"/><path d="m7 8 4-3 2 1-4 3z" fill="#f77"/></svg></button>
    <span class="sep"></span>
    <button type="button" class="join" aria-label="Selected preview"><svg viewBox="0 0 20 20"><path d="m4 5 5 2q3-4 6 0l1 5-4 4-6-1q4-4-2-10z" fill="#18a098" stroke="#064"/></svg></button>
    <button type="button" class="join" aria-label="Document preview"><svg viewBox="0 0 20 20"><circle cx="10" cy="10" r="6" fill="#3c9c28"/><path d="m4 8 4 4 4-5q4 2 2 7-5 4-9-1z" fill="#eee"/></svg></button>
    <button type="button" class="join" aria-label="Mesh quality"><svg viewBox="0 0 20 20"><circle cx="10" cy="10" r="6" fill="#f08020"/><path d="M10 4a6 6 0 0 1 0 12z" fill="#ffe8c8"/></svg></button>
    <button type="button" class="wide last" aria-label="Display"><svg viewBox="0 0 20 20"><circle cx="10" cy="10" r="5.500" fill="#5a9cf0"/><circle cx="8.500" cy="8" r="2.500" fill="#c4e0ff"/></svg></button>
  </div>
  <div class="canvas">
    <div class="sheet"></div>
    <div class="area a-sheets"></div><div class="area a-geo"></div><div class="area a-nest"></div>
    <svg class="wires" width="769" height="577" viewBox="609 189 769 577" fill="none">
      <g stroke="#5d5c57" stroke-width="3">
        <path d="M753 276h8M765 469.500h10M765 489h10M760 509h15"/><path d="M766 535q5 0 9-7" stroke-width="4"/>
        <path d="M904 334C1010 334 1060 319 1165 319" stroke-width="5" stroke-dasharray="13 5" stroke-linecap="butt"/>
        <path d="M898 479C1020 479 1040 338 1165 338"/>
        <path d="M1134 372c16 0 16-14 31-14" stroke-width="5"/>
        <path d="M1134 454c50 0-15-77 31-77M1134 473c50 0-15-77 31-77M1127 492c50 0-15-77 38-77"/>
      </g>
      <g fill="#efeeea" stroke="#000" stroke-width="2">
        <circle cx="703" cy="276" r="4"/><circle cx="751" cy="276" r="4"/>
        <circle cx="762" cy="276" r="4"/><circle cx="762" cy="295" r="4"/><circle cx="762" cy="315" r="4"/><circle cx="762" cy="334" r="4"/><circle cx="762" cy="353" r="4"/><circle cx="762" cy="373" r="4"/><circle cx="762" cy="392" r="4"/><circle cx="899" cy="334" r="4"/>
        <circle cx="715" cy="469" r="4"/><circle cx="762" cy="469" r="4"/><circle cx="715" cy="489" r="4"/><circle cx="762" cy="489" r="4"/><circle cx="756" cy="509" r="4"/><circle cx="715" cy="535" r="4"/><circle cx="762" cy="535" r="4"/>
        <circle cx="777" cy="469" r="4"/><circle cx="777" cy="489" r="4"/><circle cx="777" cy="508" r="4"/><circle cx="777" cy="527" r="4"/><circle cx="895" cy="479" r="4"/><circle cx="895" cy="518" r="4"/>
        <circle cx="960" cy="372" r="4"/><circle cx="1130" cy="372" r="4"/><circle cx="960" cy="454" r="4"/><circle cx="1130" cy="454" r="4"/><circle cx="1130" cy="473" r="4"/><circle cx="1123" cy="492" r="4"/>
        <circle cx="1167" cy="319" r="4"/><circle cx="1167" cy="338" r="4"/><circle cx="1167" cy="358" r="4"/><circle cx="1167" cy="377" r="4"/><circle cx="1167" cy="396" r="4"/><circle cx="1167" cy="415" r="4"/>
        <circle cx="1306" cy="319" r="4"/><circle cx="1306" cy="338" r="4"/><circle cx="1306" cy="358" r="4"/><circle cx="1306" cy="377" r="4"/><circle cx="1306" cy="396" r="4"/><circle cx="1306" cy="415" r="4"/>
      </g>
    </svg>

    <div class="tag t-sheets">sheets</div><div class="tag t-geo">nest_geo</div><div class="tag t-nest">nest</div>

    <div class="param p-crv1">Crv</div>
    <article class="node n-sheets">
      <ul class="in"><li>polylines</li><li>width</li><li>height</li><li>gap_x</li><li>gap_y</li><li>array_x</li><li>array_y</li></ul>
      <h4><span>sheets</span></h4>
      <ul class="out"><li>nest_sheets</li></ul>
    </article>

    <div class="param p-crv2">Crv</div>
    <div class="panel p-tol">-0.1</div>
    <div class="list p-copies"><header>{0}</header><ol><li><b>0</b>2</li></ol></div>
    <div class="toggle p-hull"><span>Toggle</span><button type="button">False</button></div>
    <article class="node n-geo">
      <ul class="in"><li>geo</li><li>simplify</li><li>hull</li><li>copies</li></ul>
      <h4><span>nest_geo</span></h4>
      <ul class="out"><li>nest_geo</li><li>borders</li></ul>
    </article>

    <div class="list p-options"><header>{0}</header><ol><li><b>0</b>num_of_rotations 1</li><li><b>1</b>wiggle 1</li><li><b>2</b>placement_type 0</li><li><b>3</b>spacing 0.0</li><li><b>4</b>seed 2</li><li><b>5</b>simplify_tolerance 1</li><li><b>6</b>mutation 10</li><li><b>7</b>population 10000</li></ol></div>
    <div class="panel p-font">MecSoft_Font-1 -30</div>
    <div class="slider p-iter"><label for="iter">iterations</label><span class="track"><output for="iter">6</output><input id="iter" type="range" min="0" max="10" value="6"></span></div>
    <div class="toggle p-run"><span>Toggle</span><button type="button">True</button></div>
    <article class="node n-nest">
      <ul class="in"><li>nest_sheets</li><li>nest_geo</li><li>options</li><li>sheet_font</li><li>iterations</li><li>run</li></ul>
      <h4><span>nest</span></h4>
      <ul class="out"><li>sheets</li><li>borders</li><li>all_geo</li><li>xforms</li><li>sheet_id</li><li>sheet_txt</li></ul>
    </article>

    <span class="edge-tab"></span>
    <svg class="compass" width="46" height="44" viewBox="0 0 46 44"><path d="M6 17Q10 7 20 2" fill="none" stroke="#000" stroke-width="3"/><path d="M0 4h7l1 4-4 3z"/><circle cx="25" cy="22" r="19.500" fill="#fff" stroke="#222"/><circle cx="25" cy="22" r="17.500" fill="url(#gDial)"/><path d="m10 9 5 5-6 1zM40 9l-1 6-5-5zM10 35l1-5 5 5zM40 35l-6 0 4-5z" fill="#fff"/></svg>
  </div>
  <footer class="gstatus"><svg width="14" height="18" viewBox="0 0 14 18"><circle cx="7" cy="9" r="6.500" fill="#1b62c8" stroke="#6fb4ff"/><path d="M5.500 4.500v6M8.500 4.500v6M5.500 12v2M8.500 12v2" stroke="#fff" stroke-width="1.500"/></svg><span>Autosave complete (90 seconds ago)</span><span class="version">1.0.0008</span></footer>
</section>
</main>
</body>
</html>
```
FILE: styles.css
```css
* { box-sizing: border-box; }
body, h1, h2, h3, h4, ul, ol { margin: 0; padding: 0; }
ul, ol { list-style: none; }
button, input, select { font: inherit; color: inherit; margin: 0; }
button { background: none; border: 0; padding: 0; }
svg { display: block; flex: none; }
.defs { position: absolute; width: 0; height: 0; }

body {
  height: 100vh;
  display: flex;
  flex-direction: column;
  overflow: hidden;
  font-family: Inter, "Liberation Sans", sans-serif;
  font-size: 12px;
  background: linear-gradient(#c9c2b2, #b3aa95 20%, #6b6350 60%, #2c2512);
}

/* system menu bar */
.menubar {
  height: 23px;
  flex: none;
  display: flex;
  align-items: center;
  padding: 0 14px 0 19px;
  background: #efece5;
  font-weight: 500;
  color: #111;
}
.menus { display: flex; gap: 20px; margin-left: 19px; }
.menus .app { font-weight: 700; margin-right: 2px; }
.menu-extras { display: flex; align-items: center; gap: 18px; margin-left: auto; }
.clock { display: flex; gap: 9px; }

/* windows */
.desktop { position: relative; flex: 1; min-height: 0; }
.window {
  position: absolute;
  display: flex;
  flex-direction: column;
  overflow: hidden;
  border-radius: 10px;
  background: #333;
}
.titlebar {
  flex: none;
  display: flex;
  align-items: center;
  justify-content: center;
  position: relative;
  background: #2a2928;
  border-bottom: 1px solid #161616;
}
.titlebar h1 { font-size: 13px; font-weight: 600; color: #7d7c7a; }
.rhino .titlebar h1 { font-size: 12px; font-weight: 700; }
.titlebar small { font-size: 12px; color: #4f4e4c; margin-left: 2px; }
.lights { position: absolute; left: 5px; display: flex; gap: 8px; }
.lights i { width: 11px; height: 11px; border-radius: 50%; background: #535250; }
.lights .edited { border: 4px solid #535250; background: #222; }

/* Rhino */
.rhino {
  left: 2px;
  top: 1px;
  right: 237px;
  bottom: 1px;
  border: 1px solid #555;
  font-family: Roboto, "Liberation Sans", sans-serif;
  font-size: 11px;
  color: #dcdcdc;
}
.rhino .titlebar { height: 27px; font-family: Inter, sans-serif; }
.toolbars { display: flex; flex: none; height: 48px; background: #333; }
.handle { width: 13px; display: flex; flex-direction: column; align-items: center; justify-content: center; gap: 3px; border-right: 1px solid #444; }
.handle i, .grip i { width: 3px; height: 3px; border-radius: 50%; background: #6d6d6d; }
.bars { flex: 1; min-width: 0; }
.rtabs { display: flex; height: 19px; background: #404040; font-weight: 500; color: #8d8d8d; }
.rtabs button { padding: 0 10px; white-space: nowrap; }
.rtabs .on { background: #333; color: #fff; border-radius: 4px 4px 0 0; }
.tools { display: flex; height: 29px; align-items: flex-start; }
.tools button, .palette button { position: relative; width: 27px; height: 27px; flex: none; }
.fly::after {
  content: "";
  position: absolute;
  right: 0;
  bottom: 0;
  border: 3px solid transparent;
  border-right-color: #b8b8b8;
  border-bottom-color: #b8b8b8;
}
.rbody { flex: 1; min-height: 0; display: flex; }
.side { width: 124px; flex: none; display: flex; flex-direction: column; background: #323232; border-right: 4px solid #3f3f3f; border-top: 1px solid #444; }
.grip { height: 12px; display: flex; justify-content: center; align-items: center; gap: 3px; border-bottom: 1px solid #3f3f3f; }
.command {
  margin: 10px 8px 11px;
  height: 20px;
  padding: 0 3px;
  border: 0;
  border-bottom: 1px solid #5a5a5a;
  background: #3b3b3b;
  font-family: Inter, sans-serif;
  font-size: 12px;
}
.command::placeholder { color: #757575; }
.palette { display: grid; grid-template-columns: repeat(4, 27px); grid-auto-rows: 27px; padding-left: 3px; }
.osnap-head { height: 31px; padding: 10px 3px 0 4px; display: flex; align-items: center; justify-content: space-between; }
.osnap-head h2 { font-family: Inter, sans-serif; font-size: 12px; font-weight: 400; color: #a5a5a5; }
.osnap-tabs { display: flex; height: 20px; background: #404040; }
.osnap-tabs button { width: 35px; display: grid; place-items: center; }
.osnap-tabs .on { background: #323232; }
.osnap-list, .osnap-off { padding-left: 13px; font-weight: 500; color: #efefef; }
.osnap-list { display: grid; grid-auto-rows: 1fr; height: 173px; margin-top: 7px; }
.osnap-off { margin-top: 17px; }
.side label { display: flex; align-items: center; gap: 4px; }
.side input[type=checkbox] {
  appearance: none;
  width: 12px;
  height: 12px;
  border-radius: 2px;
  background: linear-gradient(#555, #666);
  border: 1px solid #5c5c5c;
}
.views { flex: 1; min-width: 0; display: flex; flex-direction: column; }
.viewport { position: relative; flex: 1; min-height: 0; overflow: hidden; background: #9da1aa; }
.model { position: absolute; left: 0; top: 0; }
.part-ids { font: italic 700 8px "Liberation Sans", sans-serif; }
.sheet-id { font: 5px "Liberation Sans", sans-serif; }
.axis { font: 12px Inter, sans-serif; fill: #5b5f66; }
.view-title { position: absolute; left: 2px; top: 2px; display: flex; height: 17px; background: #8d8e8f; color: #fff; font: 700 11px/17px Inter, sans-serif; }
.view-title span { padding: 0 5px 0 3px; }
.view-title button { width: 15px; display: grid; place-items: center; border-left: 1px solid #fff; }
.view-tabs { height: 25px; flex: none; display: flex; align-items: center; background: #404040; padding: 0 9px 3px; font: 12px Inter, sans-serif; color: #a9a9a9; }
.layout { margin-right: 14px; }
.layout + .layout { margin-right: 12px; }
.view { padding: 0 20px 0 19px; border-left: 1px solid #8a8a8a; line-height: 13px; }
.view.on { color: #1f80f0; }
.rstatus { flex: none; height: 25px; display: flex; align-items: center; padding-left: 4px; background: #2f2f2f; white-space: pre; }
.rstatus > span { flex: none; }
.panels { display: flex; gap: 7px; width: 51px; }
.cplane { width: 92px; }
.coords { width: 190px; display: flex; gap: 7px; }
.units { width: 80px; }
.layer { width: 114px; display: flex; align-items: center; gap: 6px; }
.layer i { width: 16px; height: 16px; background: #000; border: 1px solid #ddd; }
.snap { width: 69px; }

/* Grasshopper */
.gh {
  left: 609px;
  top: 5px;
  right: 3px;
  bottom: 2px;
  background: #333;
  color: #ddd;
  box-shadow: 0 0 0 1px #626160, 0 4px 14px rgba(0, 0, 0, .55);
}
.gh .titlebar { height: 26px; background: #2b2a29; border-color: #1d1d1d; }
.gh .lights { left: 7px; }
.gtabs { flex: none; height: 21px; display: flex; gap: 12px; align-items: center; font: 11px "Liberation Sans", sans-serif; color: #b4b4b4; background: #2f2f2f; }
.gtabs .on { align-self: stretch; padding: 0 5px 3px; margin-right: -5px; background: #444; color: #fff; border-radius: 4px 4px 0 0; }
.ribbon { flex: none; height: 85px; display: flex; gap: 4px; align-items: flex-start; padding: 2px 3px; background: linear-gradient(#3a3a3a, #303030); border-bottom: 1px solid #3c3c3c; }
.group { display: flex; flex-direction: column; height: 70px; border: 1px solid #8b8b8b; border-radius: 4px; overflow: hidden; background: linear-gradient(#3f3f3f, #2f2f2f); }
.icons { flex: 1; display: flex; gap: 9px; padding: 2px 1px 0; }
.icons > div { display: grid; grid-auto-rows: 27px; align-content: start; position: relative; }
.icons > div + div::before { content: ""; position: absolute; left: -5px; top: 3px; width: 1px; height: 48px; background: linear-gradient(transparent, #ccc 70%, transparent); }
.c1 { grid-template-columns: 27px; }
.c2 { grid-template-columns: repeat(2, 27px); }
.c3 { grid-template-columns: repeat(3, 27px); }
.group h3 { position: relative; height: 12px; background: #050505; color: #fff; font: 10px/12px "Liberation Sans", sans-serif; text-align: center; padding-right: 10px; }
.group h3::after { content: "+"; position: absolute; right: 2px; color: #aaa; font-weight: 700; }
.glyph { font: 700 16px "Liberation Serif", serif; fill: #fff; text-anchor: middle; }
.glyph.sm { font-size: 13px; }
.idtext { font: 700 11px "Liberation Sans", sans-serif; fill: #101010; }
.gtools { flex: none; height: 29px; display: flex; align-items: center; gap: 2px; padding: 0 10px 0 0; background: #2c2a29; border-bottom: 1px solid #1b1b1b; }
.gtools button { width: 25px; height: 20px; display: grid; place-items: center; border-radius: 4px; background: #5c5a58; }
.gtools button svg { width: 19px; height: 19px; }
.gtools .wide { width: 30px; }
.gtools .eye { margin: 0 7px 0 9px; }
.gtools .lit { background: #8c8a88; }
.gtools .join { margin-right: -2px; }
.gtools .last { margin-left: 6px; }
.gtools .sep { width: 1px; height: 16px; margin: 0 3px 0 2px; background: #3f3d3b; }
.spring { flex: 1; }
.zoom { display: flex; align-items: center; width: 70px; height: 20px; padding-right: 1px; border: 1px solid #454341; border-radius: 4px; color: #fff; }
.zoom select { appearance: none; flex: 1; min-width: 0; border: 0; background: none; padding: 0 7px; font-size: 12px; }

.canvas {
  position: relative;
  flex: 1;
  min-height: 0;
  overflow: hidden;
  padding: 22px 0 0 36px;
  background: repeating-linear-gradient(45deg, rgba(120, 118, 110, .12) 0 1px, transparent 1px 3px), #d3d1ca;
}
.sheet {
  height: 100%;
  border: 1px solid #000;
  border-width: 1px 0 0 1px;
  box-shadow: 0 0 20px 3px rgba(0, 0, 0, .6);
  background: linear-gradient(90deg, #c0beb6 1px, transparent 1px), linear-gradient(#c0beb6 1px, transparent 1px), #dbd9d1;
  background-size: 144px 48px, 144px 48px, auto;
  background-origin: border-box;
}
.area { position: absolute; background: rgba(240, 240, 232, .34); border: 1px solid rgba(240, 240, 235, .4); }
.a-sheets { left: 85px; top: 67px; width: 214px; height: 157px; }
.a-geo { left: 44px; top: 259px; width: 252px; height: 114px; }
.a-nest { left: 341px; top: 102px; width: 366px; height: 222px; }
.wires { position: absolute; left: 0; top: 0; }

.node, .param, .panel, .list, .toggle, .slider { position: absolute; border: 1px solid #333; border-radius: 3px; color: #0c0c0c; font-size: 10px; font-weight: 500; box-shadow: 0 1px 1px rgba(0, 0, 0, .3); overflow: hidden; }
.node { display: grid; padding: 1px 0; background: linear-gradient(#f8f8f8, #dedede 8%, #e6e6e6 40%, #c6c6c6); }
.node ul { display: flex; flex-direction: column; }
.node li { flex: 1; display: flex; align-items: center; white-space: nowrap; }
.in li { justify-content: flex-end; padding-right: 3px; }
.out li { padding-left: 2px; }
.node h4 { display: grid; place-items: center; border: 1px solid #000; border-radius: 3px; background: linear-gradient(#999, #666 4%, #555 6%, #484848); color: #fff; font-size: 11px; font-weight: 700; }
.node h4 span { writing-mode: vertical-rl; transform: rotate(180deg); }
.n-sheets { left: 152px; top: 76px; width: 139px; height: 139px; grid-template-columns: 47px 24px 1fr; }
.n-geo { left: 167px; top: 269px; width: 120px; height: 82px; grid-template-columns: 42px 24px 1fr; }
.n-nest { left: 557px; top: 118px; width: 141px; height: 120px; grid-template-columns: 62px 24px 1fr; }

.param { display: grid; place-items: center; background: linear-gradient(#fafafa 45%, #d0d0d0 50%, #dcdcdc); }
.p-crv1 { left: 93px; top: 77px; width: 50px; height: 21px; }
.p-crv2 { left: 105px; top: 270px; width: 50px; height: 21px; }
.panel, .list { background: #fff; font: 8px "Liberation Mono", monospace; color: #333; }
.panel { display: grid; place-items: center; }
.p-tol { left: 105px; top: 291px; width: 50px; height: 19px; padding-right: 10px; }
.p-font { left: 350px; top: 256px; width: 173px; height: 19px; padding-right: 10px; }
.list header { height: 16px; line-height: 16px; background: #d9d9d9; text-align: right; padding-right: 10px; }
.list b { font-weight: 400; width: 6px; margin-right: 1px; border-right: 1px solid #ccc; text-align: center; }
.list li { display: flex; align-items: stretch; padding-left: 1px; }
.p-options { left: 350px; top: 111px; width: 173px; height: 146px; }
.p-options ol { display: grid; grid-auto-rows: 1fr; height: 124px; line-height: 15px; }
.p-options li:nth-child(even) { background: #f4f4f4; }
.p-copies { left: 105px; top: 330px; width: 50px; height: 34px; }
.p-copies ol { line-height: 16px; }

.toggle { display: flex; background: linear-gradient(#e2e2ea, #b0b0be 55%, #c2c2ce); }
.toggle span { flex: 1; display: grid; place-items: center; }
.toggle button { width: 46px; padding-right: 3px; border: 1px solid #000; border-radius: 2px; background: linear-gradient(#777, #555 30%, #484848); color: #fff; font: 12px "Liberation Mono", monospace; }
.p-hull { left: 52px; top: 310px; width: 97px; height: 21px; }
.p-run { left: 420px; top: 293px; width: 96px; height: 22px; }
.slider { display: flex; background: linear-gradient(#fafafa, #d8d8d8 50%, #e4e4e4); }
.slider label { width: 53px; display: grid; place-items: center; border-right: 1px solid #333; background: linear-gradient(#dcdce6, #aeaebc 55%, #c2c2ce); }
.track { flex: 1; position: relative; display: flex; align-items: center; padding: 0 8px; }
.track output { position: absolute; left: 55px; }
.track input { appearance: none; width: 100%; height: 5px; border-bottom: 1px solid #bbb; background: repeating-linear-gradient(90deg, #bbb 0 1px, transparent 1px 10px); }
.track input::-webkit-slider-thumb { appearance: none; width: 6px; height: 6px; border: 2px solid #000; background: #fff; transform: rotate(45deg); }
.p-iter { left: 350px; top: 275px; width: 173px; height: 20px; }

.tag { position: absolute; height: 17px; padding: 1px 2px 0; border: 1px solid #000; background: #f6f6f6; color: #111; font-size: 10px; font-weight: 500; line-height: 15px; text-align: center; }
.tag::after { content: ""; position: absolute; left: 50%; bottom: -4px; width: 7px; height: 7px; margin-left: -4px; background: #f6f6f6; border: solid #000; border-width: 0 1px 1px 0; transform: rotate(45deg); clip-path: polygon(100% 0, 100% 100%, 0 100%); }
.t-sheets { left: 173px; top: 45px; min-width: 38px; }
.t-geo { left: 144px; top: 238px; min-width: 50px; }
.t-nest { left: 510px; top: 81px; min-width: 27px; }

.edge-tab { position: absolute; left: 0; bottom: 0; width: 7px; height: 27px; border: 1px solid #000; border-left: 0; background: linear-gradient(#eee, #999 40%); }
.compass { position: absolute; right: 8px; bottom: 7px; }
.gstatus { flex: none; height: 24px; display: flex; align-items: center; gap: 3px; padding: 0 69px 0 2px; background: #2a2928; color: #f2f2f2; font-size: 12px; }
.version { margin-left: auto; }
```
